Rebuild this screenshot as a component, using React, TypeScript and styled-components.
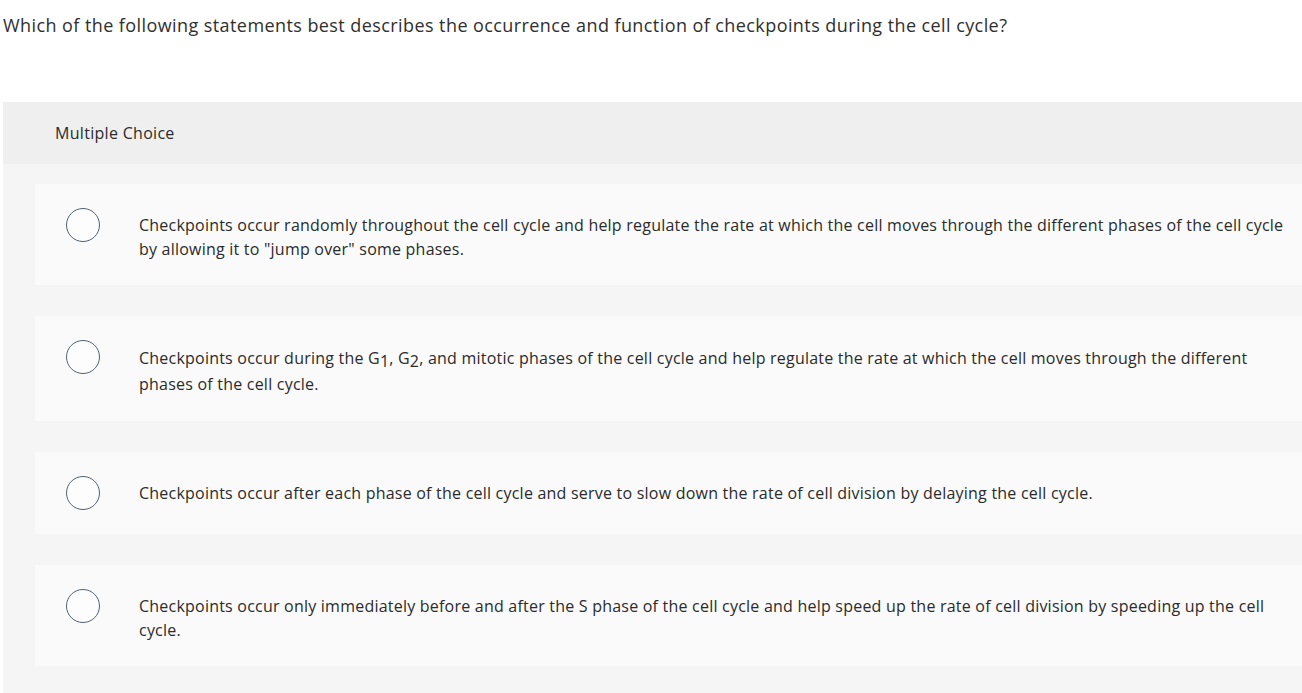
import { createGlobalStyle, styled } from 'styled-components'

const GlobalStyle = createGlobalStyle`
  body {
    margin: 0;
    background: #fff;
    font-family: 'Open Sans', Lato, sans-serif;
    color: #2b2b2b;
    overflow: hidden;
  }
`

const Page = styled.div`
  width: 1302px;
  height: 693px;
  overflow: hidden;
`

const Question = styled.p`
  margin: 0;
  padding: 13px 0 0 3px;
  font-size: 18px;
  line-height: 24px;
  color: #2f2f2f;
  letter-spacing: 0.42px;
`

const Panel = styled.section`
  margin: 65px 0 0 3px;
  width: 1340px;
  background: #f5f5f5;
  padding-bottom: 40px;
`

const PanelHeader = styled.div`
  height: 62px;
  display: flex;
  align-items: center;
  padding-left: 52px;
  background: #efefef;
  font-size: 16px;
  letter-spacing: 0.3px;
  color: #2b2b2b;
`

const Choices = styled.div`
  display: flex;
  flex-direction: column;
  gap: 31px;
  padding: 20px 0 0 32px;
`

const Card = styled.label`
  display: flex;
  align-items: flex-start;
  background: #fafafa;
  padding: 29px 0 24px 31px;
`

const Radio = styled.span`
  flex: none;
  width: 32px;
  height: 32px;
  border-radius: 50%;
  border: 1.5px solid #4f6275;
  background: #fdfdfd;
  margin-top: -5px;
`

const ChoiceText = styled.span<{ $tall?: boolean }>`
  margin-left: 39px;
  width: 1152px;
  font-size: 16px;
  letter-spacing: 0.22px;
  line-height: ${(p) => (p.$tall ? '26px' : '24px')};
  color: #2b2b2b;
`

const Sub = styled.span`
  display: inline-block;
  transform: translateY(3px);
`

const App = () => {
  return (
    <Page>
      <GlobalStyle />
      <Question>
        Which of the following statements best describes the occurrence and function of checkpoints during the cell cycle?
      </Question>
      <Panel>
        <PanelHeader>Multiple Choice</PanelHeader>
        <Choices>
          <Card>
            <Radio />
            <ChoiceText>
              Checkpoints occur randomly throughout the cell cycle and help regulate the rate at which the cell moves through the different phases of the cell cycle by allowing it to "jump over" some phases.
            </ChoiceText>
          </Card>
          <Card>
            <Radio />
            <ChoiceText $tall>
              Checkpoints occur during the G<Sub>1</Sub>, G<Sub>2</Sub>, and mitotic phases of the cell cycle and help regulate the rate at which the cell moves through the different phases of the cell cycle.
            </ChoiceText>
          </Card>
          <Card>
            <Radio />
            <ChoiceText>
              Checkpoints occur after each phase of the cell cycle and serve to slow down the rate of cell division by delaying the cell cycle.
            </ChoiceText>
          </Card>
          <Card>
            <Radio />
            <ChoiceText>
              Checkpoints occur only immediately before and after the S phase of the cell cycle and help speed up the rate of cell division by speeding up the cell cycle.
            </ChoiceText>
          </Card>
        </Choices>
      </Panel>
    </Page>
  )
}

export default App
